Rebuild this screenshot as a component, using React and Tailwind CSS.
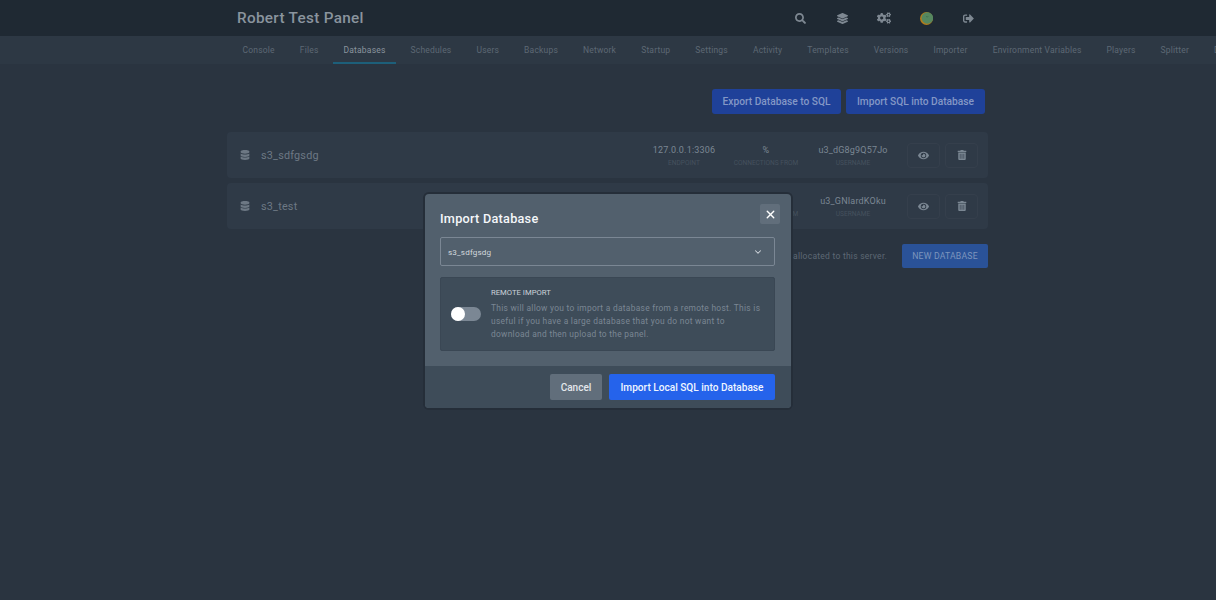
import { ChevronDown, X } from 'lucide-react';
import { FaCogs, FaDatabase, FaEye, FaLayerGroup, FaSearch, FaSignOutAlt, FaTrashAlt } from 'react-icons/fa';

const tabs = [
  'Console', 'Files', 'Databases', 'Schedules', 'Users', 'Backups', 'Network', 'Startup', 'Settings',
  'Activity', 'Templates', 'Versions', 'Importer', 'Environment Variables', 'Players', 'Splitter', 'Domains',
];

const databases = [
  { name: 's3_sdfgsdg', endpoint: '127.0.0.1:3306', from: '%', username: 'u3_dG8g9Q57Jo' },
  { name: 's3_test', endpoint: '127.0.0.1:3306', from: '%', username: 'u3_GNIardKOku' },
];

const Stat = ({ value, label, width }) => (
  <div className={`${width} shrink-0 pt-[1px] text-center`}>
    <p className="text-[9px] leading-[15px] tracking-[0.02em] text-[#7b8793] whitespace-nowrap">{value}</p>
    <p className="text-[6.6px] leading-[11px] uppercase text-[#45515e] whitespace-nowrap">{label}</p>
  </div>
);

const IconButton = ({ children }) => (
  <button type="button" className="flex h-[25px] w-[33px] items-center justify-center rounded border border-[#353f4c] text-[#7b8793]">
    {children}
  </button>
);

const App = () => {
  return (
    <div className="relative h-[600px] w-[1216px] overflow-hidden bg-[#2a3440] font-['Roboto',sans-serif]">
      <header className="h-9 bg-[#1f2933]">
        <div className="ml-[227px] flex h-full w-[762px] items-center pl-[10px]">
          <h1 className="flex-1 pt-[1px] text-[15.3px] font-medium tracking-[0.02em] text-[#8a949e]">Robert Test Panel</h1>
          <div className="flex items-center text-[#7e8892]">
            <span className="flex w-[42px] justify-center"><FaSearch size={11} /></span>
            <span className="flex w-[42px] justify-center"><FaLayerGroup size={11} /></span>
            <span className="flex w-[42px] justify-center"><FaCogs size={14} /></span>
            <span className="flex w-[42px] justify-center">
              <svg width="13" height="13" viewBox="0 0 13 13">
                <circle cx="6.5" cy="6.5" r="6.5" fill="#b07d1c" />
                <circle cx="7.4" cy="6" r="5.8" fill="#55875f" />
                <path d="M6 4.5q1.2 .8 2.4 0" fill="none" stroke="#3d6a49" strokeWidth="0.7" />
              </svg>
            </span>
            <span className="flex w-[42px] justify-center"><FaSignOutAlt size={11} /></span>
          </div>
        </div>
      </header>

      <nav className="flex h-7 items-stretch gap-[4px] overflow-hidden whitespace-nowrap bg-[#2d3844] pl-[232px]">
        {tabs.map((tab) => (
          <a
            key={tab}
            className={
              tab === 'Databases'
                ? 'flex shrink-0 items-center border-b-2 border-[#1d5f7a] px-[10.5px] pt-[2px] text-[8.5px] tracking-[0.023em] text-[#8a949e]'
                : 'flex shrink-0 items-center border-b-2 border-transparent px-[10.5px] pt-[2px] text-[8.5px] tracking-[0.023em] text-[#5d6874]'
            }
          >
            {tab}
          </a>
        ))}
      </nav>

      <main className="ml-[227px] w-[761px]">
        <div className="flex justify-end gap-[5px] pr-[3px] pt-[25px]">
          <button type="button" className="h-[25px] w-[129px] rounded-[3px] bg-[#1f4199] pt-[1px] text-[10.2px] font-medium text-[#8498c6]">
            Export Database to SQL
          </button>
          <button type="button" className="h-[25px] w-[139px] rounded-[3px] bg-[#1f4199] pt-[1px] text-[10.2px] font-medium text-[#8498c6]">
            Import SQL into Database
          </button>
        </div>

        <div className="mt-[18px] flex flex-col gap-[5px]">
          {databases.map((db) => (
            <div key={db.name} className="flex h-[46px] items-center rounded bg-[#2f3a47] pl-[13px] pr-[10px]">
              <FaDatabase size={10} className="shrink-0 text-[#6d7884]" />
              <p className="ml-[11px] flex-1 pt-[2px] text-[10.8px] tracking-[0.02em] text-[#6d7884]">{db.name}</p>
              <Stat value={db.endpoint} label="Endpoint" width="w-[84px]" />
              <Stat value={db.from} label="Connections From" width="w-[80px]" />
              <Stat value={db.username} label="Username" width="w-[94px]" />
              <div className="ml-[7px] flex gap-[5px]">
                <IconButton><FaEye size={11} /></IconButton>
                <IconButton><FaTrashAlt size={10} /></IconButton>
              </div>
            </div>
          ))}
        </div>

        <div className="mt-[15px] flex items-center justify-end gap-[15px]">
          <p className="text-[8.5px] tracking-[0.03em] text-[#5d6874]">2 of 5 databases have been allocated to this server.</p>
          <button type="button" className="h-6 w-[86px] rounded-[2px] bg-[#2a5298] pt-[1px] text-[8.7px] tracking-[0.02em] text-[#7d95bd]">
            NEW DATABASE
          </button>
        </div>
      </main>

      {/* import dialog, sits over the dimmed page */}
      <div className="absolute left-[425px] top-[194px] w-[366px] overflow-hidden rounded bg-[#52606d] shadow-[0_0_0_2px_#252e39]">
        <button type="button" className="absolute right-[11px] top-[10px] flex h-5 w-5 items-center justify-center rounded-[2px] bg-[#616e7b] text-white">
          <X size={13} strokeWidth={2.5} />
        </button>
        <div className="pb-[15px] pl-[15px] pr-[16px] pt-[15px]">
          <h2 className="text-[12.7px] font-medium leading-[19px] tracking-[0.02em] text-[#f5f7fa]">Import Database</h2>
          <div className="mt-[9px] flex h-[29px] items-center justify-between rounded-[2px] border border-[#7b8794] pl-[7px] pr-[8px] pt-[1px] text-[8.1px] tracking-[0.02em] text-[#d3d8de]">
            <span>s3_sdfgsdg</span>
            <ChevronDown size={10} strokeWidth={2.5} className="mr-[3px]" />
          </div>
          <div className="mt-[11px] flex h-[74px] items-center rounded-[2px] border border-[#3a4754] bg-[#3e4c59] pl-[10px] pr-[8px]">
            <div className="flex h-[14px] w-[30px] shrink-0 items-center rounded-full bg-[#7b8794]">
              <span className="h-[14px] w-[14px] rounded-full bg-white" />
            </div>
            <div className="ml-[10px]">
              <p className="text-[7.7px] leading-[12px] text-[#cbd2d9]">REMOTE IMPORT</p>
              <p className="mt-[3px] text-[8.4px] leading-[12.7px] tracking-[0.035em] text-[#7b8794]">
                This will allow you to import a database from a remote host. This is useful if you have a large database that you do not want to download and then upload to the panel.
              </p>
            </div>
          </div>
        </div>
        <div className="flex h-[42px] items-center justify-end gap-[7px] bg-[#3e4c59] pl-[15px] pr-[16px]">
          <button type="button" className="h-[26px] w-[52px] rounded-[2px] bg-[#616e7b] pt-[1px] text-[10px] font-medium text-[#e4e7eb]">
            Cancel
          </button>
          <button type="button" className="h-[26px] w-[166px] rounded-[2px] bg-[#2563eb] pt-[1px] text-[10.1px] font-medium text-[#eff6ff]">
            Import Local SQL into Database
          </button>
        </div>
      </div>
    </div>
  );
};

export default App;
